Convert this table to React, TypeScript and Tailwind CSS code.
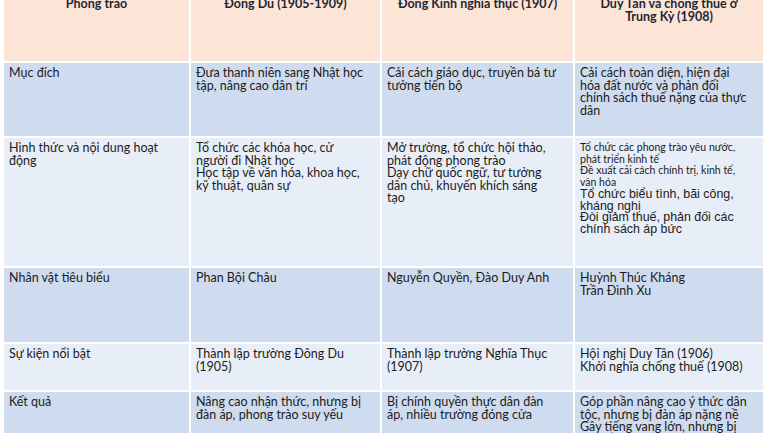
import React from 'react';

type Cell = string[];

const headers: Cell[] = [
  ['Phong trào'],
  ['Đông Du (1905-1909)'],
  ['Đông Kinh nghĩa thục (1907)'],
  ['Duy Tân và chống thuế ở', 'Trung Kỳ (1908)'],
];

const rows: { h: string; bg: string; cells: Cell[] }[] = [
  {
    h: 'h-[73px]',
    bg: 'bg-[#cfdbee]',
    cells: [
      ['Mục đích'],
      ['Đưa thanh niên sang Nhật học', 'tập, nâng cao dân trí'],
      ['Cải cách giáo dục, truyền bá tư', 'tưởng tiến bộ'],
      ['Cải cách toàn diện, hiện đại', 'hóa đất nước và phản đối', 'chính sách thuế nặng của thực', 'dân'],
    ],
  },
  {
    h: 'h-[128px]',
    bg: 'bg-[#e8eef7]',
    cells: [
      ['Hình thức và nội dung hoạt', 'động'],
      ['Tổ chức các khóa học, cử', 'người đi Nhật học', 'Học tập về văn hóa, khoa học,', 'kỹ thuật, quân sự'],
      ['Mở trường, tổ chức hội thảo,', 'phát động phong trào', 'Dạy chữ quốc ngữ, tư tưởng', 'dân chủ, khuyến khích sáng', 'tạo'],
      [],
    ],
  },
  {
    h: 'h-[74px]',
    bg: 'bg-[#cfdbee]',
    cells: [
      ['Nhân vật tiêu biểu'],
      ['Phan Bội Châu'],
      ['Nguyễn Quyền, Đào Duy Anh'],
      ['Huỳnh Thúc Kháng', 'Trần Đình Xu'],
    ],
  },
  {
    h: 'h-[46px]',
    bg: 'bg-[#e8eef7]',
    cells: [
      ['Sự kiện nổi bật'],
      ['Thành lập trường Đông Du', '(1905)'],
      ['Thành lập trường Nghĩa Thục', '(1907)'],
      ['Hội nghị Duy Tân (1906)', 'Khởi nghĩa chống thuế (1908)'],
    ],
  },
  {
    h: 'h-[80px]',
    bg: 'bg-[#cfdbee]',
    cells: [
      ['Kết quả'],
      ['Nâng cao nhận thức, nhưng bị', 'đàn áp, phong trào suy yếu'],
      ['Bị chính quyền thực dân đàn', 'áp, nhiều trường đóng cửa'],
      ['Góp phần nâng cao ý thức dân', 'tộc, nhưng bị đàn áp nặng nề', 'Gây tiếng vang lớn, nhưng bị', 'dập tắt'],
    ],
  },
];

// the mixed-font cell (row 2, last column)
const mixedSmall = ['Tổ chức các phong trào yêu nước,', 'phát triển kinh tế', 'Đề xuất cải cách chính trị, kinh tế,', 'văn hóa'];
const mixedArial = ['Tổ chức biểu tình, bãi công,', 'kháng nghị', 'Đòi giảm thuế, phản đối các', 'chính sách áp bức'];

const Lines = ({ lines }: { lines: string[] }) => (
  <>
    {lines.map((l, i) => (
      <div key={i} className="whitespace-nowrap">
        {l}
      </div>
    ))}
  </>
);

export default function App() {
  return (
    <div className="h-[433px] w-[768px] overflow-hidden bg-white font-['Lato',sans-serif] text-[12.5px] leading-[12.5px] text-[#1c1c1c]">
      <div className="mt-[-5px] pl-[4px] grid grid-cols-[185px_189px_191px_188px] gap-[2px]">
        {headers.map((c, i) => (
          <div key={i} className="h-[66px] bg-[#fce4d6] px-[5px] pt-[3px] text-center font-bold text-[#1d2736]">
            <Lines lines={c} />
          </div>
        ))}
        {rows.map((r, ri) =>
          r.cells.map((c, ci) => (
            <div key={ri + '-' + ci} className={`${r.h} ${r.bg} px-[5px] pt-[4px] overflow-hidden`}>
              {ri === 1 && ci === 3 ? (
                <>
                  <div className="text-[10.5px] leading-[11.7px]">
                    <Lines lines={mixedSmall} />
                  </div>
                  <div className="font-['Liberation_Sans',sans-serif] text-[12.4px] leading-[11.7px]">
                    <Lines lines={mixedArial} />
                  </div>
                </>
              ) : (
                <Lines lines={c} />
              )}
            </div>
          ))
        )}
      </div>
    </div>
  );
}
